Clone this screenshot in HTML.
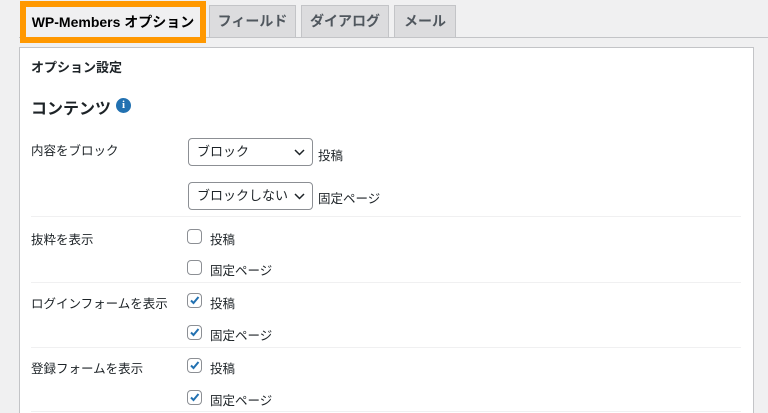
<!DOCTYPE html>
<html><head><meta charset="utf-8"><style>
html,body{margin:0;width:768px;height:413px;overflow:hidden}
body{background:#f0f0f1;position:relative;font-family:"Liberation Sans","Noto Sans CJK JP",sans-serif;color:#1d2327;font-size:13px}
.a{position:absolute}
.tab{position:absolute;top:5px;height:31px;background:#dcdcde;border:1px solid #c3c4c7;border-bottom:none;font-weight:bold;font-size:14px;color:#50575e;line-height:31px;text-align:center}
.line{position:absolute;left:19px;top:37px;width:749px;height:1px;background:#c3c4c7}
.panel{position:absolute;left:19px;top:47px;width:733px;height:380px;background:#fff;border:1px solid #c3c4c7}
.sep{position:absolute;left:31px;width:710px;height:1px;background:#f0f0f1}
.sel{position:absolute;left:188px;height:28px;border:1px solid #8c8f94;border-radius:4px;background:#fff;font-size:13px;line-height:26px;padding-left:8px;box-sizing:border-box;width:125px;white-space:nowrap;overflow:hidden}
.sel svg{position:absolute;right:7px;top:10px;background:#fff}
.cb{position:absolute;left:187px;width:15px;height:15px;border:1px solid #8c8f94;border-radius:4px;background:#fff;box-sizing:border-box}
.lbl{position:absolute;font-size:12.5px}
</style></head><body>
<div class="line"></div>
<div class="a" style="left:20px;top:1px;width:174px;height:30px;border:6px solid #ff9800;background:#f0f0f1;font-weight:bold;font-size:14px;line-height:30px;text-align:center;color:#000">WP-Members オプション</div>
<div class="tab" style="left:209px;width:85px">フィールド</div>
<div class="tab" style="left:301px;width:86px">ダイアログ</div>
<div class="tab" style="left:394px;width:60px">メール</div>
<div class="panel"></div>
<div class="a" style="left:31px;top:57px;font-weight:bold;font-size:13px">オプション設定</div>
<div class="a" style="left:31px;top:95px;font-weight:bold;font-size:16px">コンテンツ</div>
<div class="a" style="left:116px;top:98px;width:15px;height:15px;border-radius:50%;background:#2271b1;color:#fff;font-weight:bold;font-size:11px;line-height:15px;text-align:center;font-family:'Liberation Serif',serif">i</div>
<div class="lbl" style="left:31px;top:140px">内容をブロック</div>
<div class="sel" style="top:138px">ブロック<svg width="11" height="7"><path d="M1 1l4.5 4.5L10 1" stroke="#1d2327" stroke-width="1.5" fill="none"/></svg></div>
<div class="lbl" style="left:318px;top:145px">投稿</div>
<div class="sel" style="top:182px">ブロックしない<svg width="11" height="7"><path d="M1 1l4.5 4.5L10 1" stroke="#1d2327" stroke-width="1.5" fill="none"/></svg></div>
<div class="lbl" style="left:318px;top:188px">固定ページ</div>
<div class="sep" style="top:216px"></div>
<div class="lbl" style="left:31px;top:229px">抜粋を表示</div>
<div class="cb" style="top:229px"></div><div class="lbl" style="left:210px;top:229px">投稿</div>
<div class="cb" style="top:260px"></div><div class="lbl" style="left:210px;top:260px">固定ページ</div>
<div class="sep" style="top:282px"></div>
<div class="lbl" style="left:31px;top:293px">ログインフォームを表示</div>
<div class="cb" style="top:293px"><svg width="13" height="13"><path d="M3 6.5l2.5 2.5L10.5 3" stroke="#2271b1" stroke-width="2" fill="none"/></svg></div><div class="lbl" style="left:210px;top:293px">投稿</div>
<div class="cb" style="top:325px"><svg width="13" height="13"><path d="M3 6.5l2.5 2.5L10.5 3" stroke="#2271b1" stroke-width="2" fill="none"/></svg></div><div class="lbl" style="left:210px;top:325px">固定ページ</div>
<div class="sep" style="top:347px"></div>
<div class="lbl" style="left:31px;top:358px">登録フォームを表示</div>
<div class="cb" style="top:358px"><svg width="13" height="13"><path d="M3 6.5l2.5 2.5L10.5 3" stroke="#2271b1" stroke-width="2" fill="none"/></svg></div><div class="lbl" style="left:210px;top:358px">投稿</div>
<div class="cb" style="top:390px"><svg width="13" height="13"><path d="M3 6.5l2.5 2.5L10.5 3" stroke="#2271b1" stroke-width="2" fill="none"/></svg></div><div class="lbl" style="left:210px;top:390px">固定ページ</div>
<div class="sep" style="top:411px"></div>
</body></html>
